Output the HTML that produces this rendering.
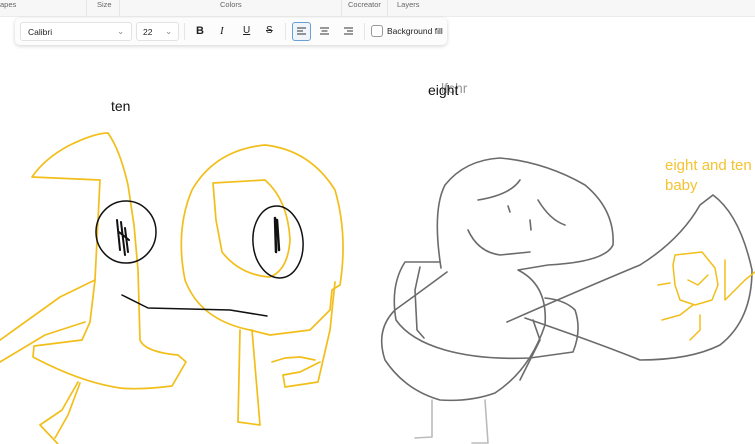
<!DOCTYPE html>
<html><head><meta charset="utf-8"><style>
body{margin:0;width:755px;height:444px;overflow:hidden;background:#fff;font-family:"Liberation Sans",sans-serif;position:relative}
.hdr{position:absolute;left:0;top:0;width:755px;height:16px;background:#f7f7f7;border-bottom:1px solid #ececec;font-size:7.5px;color:#666}
.hdr span{position:absolute;top:0px}
.sep{position:absolute;top:0;width:1px;height:16px;background:#e6e6e6}
.tb{position:absolute;left:15px;top:18px;width:432px;height:27px;background:#fcfcfc;border-radius:5px;box-shadow:0 1px 4px rgba(0,0,0,.18);font-size:8.5px;color:#222}
.box{position:absolute;top:4px;height:17px;border:1px solid #e2e2e2;border-radius:3px;background:#fff}
.t{position:absolute}
</style></head><body>
<div class="hdr">
<span style="left:0">apes</span><div class="sep" style="left:86px"></div>
<span style="left:97px">Size</span><div class="sep" style="left:119px"></div>
<span style="left:220px">Colors</span><div class="sep" style="left:341px"></div>
<span style="left:348px">Cocreator</span><div class="sep" style="left:387px"></div>
<span style="left:397px">Layers</span>
</div>
<div class="tb">
<div class="box" style="left:5px;width:110px"><span class="t" style="left:7px;top:4px">Calibri</span><span class="t" style="left:96px;top:3px;color:#888">⌄</span></div>
<div class="box" style="left:121px;width:41px"><span class="t" style="left:6px;top:4px">22</span><span class="t" style="left:28px;top:3px;color:#888">⌄</span></div>
<div class="sep" style="left:169px;top:5px;height:17px"></div>
<span class="t" style="left:181px;top:7px;font-weight:bold;font-size:11px">B</span>
<span class="t" style="left:205px;top:7px;font-style:italic;font-size:11px;font-family:'Liberation Serif',serif">I</span>
<span class="t" style="left:228px;top:7px;text-decoration:underline;font-size:10px">U</span>
<span class="t" style="left:251px;top:7px;text-decoration:line-through;font-size:10px">S</span>
<div class="sep" style="left:270px;top:5px;height:17px"></div>
<div class="box" style="left:277px;width:17px;border-color:#6a9fd1;background:#f0f5fb"></div>
<svg class="t" style="left:0;top:0" width="432" height="27" stroke="#333" stroke-width="0.9">
<path d="M282 10h9M282 13h6M282 16h9M305 10h9M306.5 13h6M305 16h9M329 10h9M332 13h6M329 16h9"/></svg>
<div class="sep" style="left:349px;top:5px;height:17px"></div>
<div class="box" style="left:356px;top:7px;width:10px;height:10px;border-color:#999"></div>
<span class="t" style="left:372px;top:8px">Background fill</span>
</div>
<div class="t" style="left:111px;top:98px;font-size:14px;color:#111">ten</div>
<div class="t" style="left:441px;top:80px;font-size:14px;color:#999">lfchr</div>
<div class="t" style="left:428px;top:82px;font-size:14px;color:#111">eight</div>
<div class="t" style="left:665px;top:156px;font-size:15px;color:#f5c230;line-height:20px;white-space:nowrap">eight and ten<br>baby</div>
<svg class="t" style="left:0;top:0" width="755" height="444" fill="none" stroke-linejoin="round" stroke-linecap="round">
<g stroke="#f2be1a" stroke-width="1.7">
<path d="M32 177Q45 158 70 145Q95 133 108 133Q120 150 128 185L134 225L138 270L140 340Q145 352 178 355L186 362L172 386Q140 390 120 388Q80 382 33 357L34 346L82 340L90 322L95 280L98 220L100 180L32 177Z"/>
<path d="M95 280L60 297L0 340M85 322L45 335L0 362M80 383L68 415L55 438M78 382L62 410L40 425L58 444"/>
<path d="M213 183L265 180Q288 200 290 240Q288 270 270 277Q240 275 222 252L216 220L213 183"/>
<path d="M250 330Q200 320 185 280Q175 230 192 190Q215 150 265 145Q310 150 335 190Q348 235 340 285L332 290L330 310L310 330L270 335L250 330"/>
<path d="M240 330L238 422L260 425L252 330M335 282L330 330L318 382L285 387L283 375L300 372L320 362M272 362L285 358L300 357L315 360"/>
</g>
<g stroke="#111" stroke-width="1.5">
<ellipse cx="126" cy="232" rx="30" ry="31"/>
<ellipse cx="278" cy="242" rx="25" ry="36" transform="rotate(-5 278 242)"/>
<path d="M122 295L148 308L230 310L267 316"/>
<path d="M117 220L120 250M121 222L125 255M125 228L128 252M119 232L129 240" stroke-width="2"/>
<path d="M275 218L276 252M277 220L279 250" stroke-width="2.5"/>
</g>
<g stroke="#6b6b6b" stroke-width="1.6">
<path d="M441 268Q432 210 445 185Q465 160 500 158Q545 162 585 185Q615 210 613 245Q605 262 548 265L518 270Q548 285 545 325Q530 370 495 393Q470 402 440 400Q405 390 385 360Q375 330 395 310Q420 292 447 272"/>
<path d="M468 230Q478 252 500 255L530 252M520 180Q510 195 478 200M538 200Q550 220 565 225M508 206L510 212M530 220L531 230"/>
<path d="M440 262L405 262Q390 285 396 320Q410 340 445 350Q480 360 530 358L573 352Q582 330 575 310Q565 300 545 298"/>
<path d="M420 267L415 290L417 330L424 338"/>
<path d="M507 322Q580 290 640 265Q680 240 700 205L713 195Q740 215 752 270Q752 320 720 345Q690 360 640 360Q595 342 525 318"/>
<path d="M533 320L540 340L530 360L520 380"/>
</g>
<g stroke="#bbb" stroke-width="1.6"><path d="M432 400L432 437L415 438M485 400L488 443L472 443"/></g>
<g stroke="#f2be1a" stroke-width="1.5">
<path d="M675 255L702 252L715 268L718 285L712 300L695 305L680 300L675 285L673 265Z"/>
<path d="M688 280L698 285L708 275M658 285L670 283M693 305L680 315L662 320M700 315L700 330L690 340M725 260L725 300L745 280L755 272"/>
</g>
</svg>
</body></html>
